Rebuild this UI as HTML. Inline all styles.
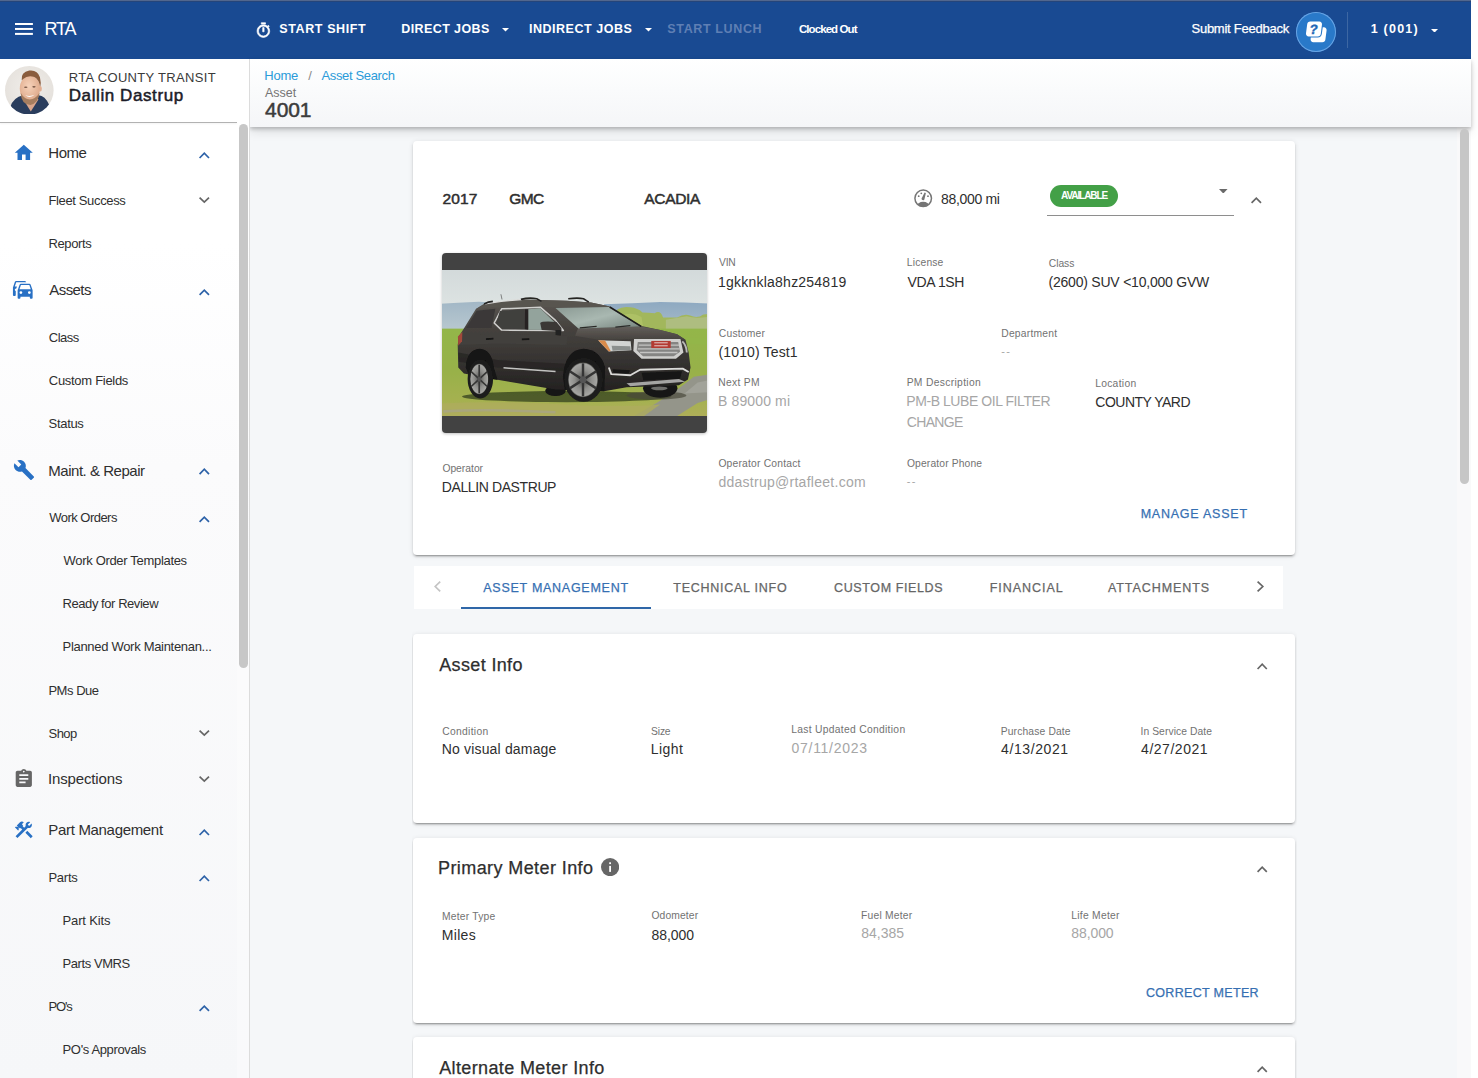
<!DOCTYPE html>
<html lang="en"><head><meta charset="utf-8"><title>RTA - Asset 4001</title>
<style>

html,body{margin:0;padding:0}
body{width:1478px;height:1078px;overflow:hidden;background:#ffffff;position:relative;font-family:"Liberation Sans",Arial,sans-serif}
.a{position:absolute}
.t{position:absolute;white-space:nowrap;line-height:20px;margin:0}
.wr{font-weight:400}
.wm{font-weight:400;-webkit-text-stroke:0.25px currentColor}
.wM{font-weight:400;-webkit-text-stroke:0.5px currentColor}
.wb{font-weight:700}
.mk{display:inline-block;width:0;height:0}
#topline{left:0;top:0;width:1471px;height:1px;background:#52678e;z-index:3}
#appbar{left:0;top:1px;width:1471px;height:58px;background:#194a92;box-shadow:inset 0 1px 0 #25457a}
#main{left:250px;top:59px;width:1221px;height:1019px;background:#f5f7f9;overflow:hidden}
#crumbbar{left:250px;top:59px;width:1221px;height:68px;background:linear-gradient(180deg,#ffffff 0%,#fafbfc 45%,#f5f6f8 100%);box-shadow:0 2px 4px rgba(0,0,0,.22),0 5px 10px rgba(0,0,0,.10)}
#side{left:0;top:59px;width:249px;height:1019px;background:linear-gradient(180deg,#ffffff 0%,#ffffff 18%,#fbfbfc 40%,#f6f7f9 100%);border-right:1px solid #dcdcdc;overflow:hidden}
#user{left:0;top:0;width:249px;height:63px;background:#fff}
#uline{left:0;top:122px;width:237px;height:1px;background:#b2b2b2;box-shadow:0 1px 2px rgba(0,0,0,.07)}
#sb1{left:239px;top:124px;width:9px;height:544px;border-radius:4.5px;background:#c7c7c7}
#sb2{left:1460px;top:129px;width:9px;height:355px;border-radius:5px;background:#c6c6c6}
#sbtrack1{left:237px;top:123px;width:12px;height:955px;background:rgba(255,255,255,.3)}
#sbtrack{left:1457px;top:127px;width:14px;height:951px;background:#f9f9fa}
.card{position:absolute;background:#fff;border-radius:4px;box-shadow:0 3px 1px -2px rgba(0,0,0,.2),0 2px 2px 0 rgba(0,0,0,.14),0 1px 5px 0 rgba(0,0,0,.12)}
#c1{left:413px;top:141px;width:882px;height:414px}
#lower{left:411.500px;top:620px;width:885px;height:458px;overflow:hidden}
#c2{left:1.500px;top:14px;width:882px;height:189px}
#c3{left:1.500px;top:218px;width:882px;height:185px}
#c4{left:1.500px;top:417px;width:882px;height:80px}
#tabs{left:414px;top:566px;width:869px;height:43px;background:#fff}
#ink{left:461px;top:606.5px;width:189.5px;height:2.5px;background:#2f67a8}
#photo{left:442px;top:253px;width:265px;height:180px;border-radius:4px;background:#424242;overflow:hidden;box-shadow:0 1px 3px rgba(0,0,0,.25)}
#photo svg{position:absolute;left:0;top:17px}
#chip{left:1050px;top:185px;width:68px;height:22px;border-radius:11px;background:#43a047}
#selline{left:1047px;top:215px;width:187px;height:1px;background:#8e8e8e}
#fb{left:1296px;top:12px;width:40px;height:40px;border-radius:50%;background:#2979c9;box-shadow:inset 0 0 0 1px rgba(120,175,235,.8)}
#vdiv{left:1347px;top:12px;width:1px;height:36px;background:rgba(255,255,255,.16)}
svg{display:block}


</style></head>
<body>

<div class="a" id="topline"></div>
<header class="a" id="appbar"></header>
<div class="a" id="fb"></div>
<div class="a" id="vdiv"></div>
<main class="a" id="main"></main>
<div class="a" id="sbtrack"></div>
<section class="card" id="c1"></section>
<div class="a" id="photo"><svg width="265" height="146" viewBox="33 118 1417 782" preserveAspectRatio="none">
<defs>
<linearGradient id="sky" x1="0" y1="0" x2="0" y2="1"><stop offset="0" stop-color="#d2d9da"/><stop offset=".6" stop-color="#dde3e2"/><stop offset="1" stop-color="#e6e9e5"/></linearGradient>
<linearGradient id="hl" x1="0" y1="0" x2="0" y2="1"><stop offset="0" stop-color="#a2b7c6"/><stop offset="1" stop-color="#b9c9d0"/></linearGradient>
<linearGradient id="hr" x1="0" y1="0" x2="0" y2="1"><stop offset="0" stop-color="#8ea9c1"/><stop offset="1" stop-color="#adc0cb"/></linearGradient>
<linearGradient id="grass" x1="0" y1="0" x2="0" y2="1"><stop offset="0" stop-color="#93b64a"/><stop offset=".45" stop-color="#97b149"/><stop offset=".8" stop-color="#a5b150"/><stop offset="1" stop-color="#b0ae5b"/></linearGradient>
<linearGradient id="carbody" x1="0" y1="0" x2="0" y2="1"><stop offset="0" stop-color="#5b5753"/><stop offset=".3" stop-color="#46433f"/><stop offset=".62" stop-color="#383533"/><stop offset="1" stop-color="#232120"/></linearGradient>
<linearGradient id="hood" x1="0" y1="0" x2="0" y2="1"><stop offset="0" stop-color="#625e5a"/><stop offset="1" stop-color="#47433f"/></linearGradient>
<linearGradient id="ws" x1="0" y1="0" x2="1" y2="1"><stop offset="0" stop-color="#8a9993"/><stop offset=".5" stop-color="#a9b8b1"/><stop offset="1" stop-color="#75837d"/></linearGradient>
<radialGradient id="rim" cx=".5" cy=".5" r=".5"><stop offset="0" stop-color="#4d4d4b"/><stop offset=".55" stop-color="#8f8f8c"/><stop offset=".92" stop-color="#a5a5a2"/><stop offset="1" stop-color="#4a4a48"/></radialGradient>
<filter id="soft" x="-2%" y="-2%" width="104%" height="104%"><feGaussianBlur stdDeviation="2.4"/></filter>
</defs>
<g filter="url(#soft)">
<rect x="0" y="100" width="1500" height="350" fill="url(#sky)"/>
<path d="M0 300 L120 293 L230 288 L320 293 L420 300 L420 445 L0 445z" fill="url(#hl)"/>
<path d="M900 302 L1050 296 L1200 290 L1330 292 L1500 299 L1500 470 L900 470z" fill="url(#hr)"/>
<path d="M970 330 Q1000 310 1040 318 Q1080 322 1105 345 Q1140 345 1170 350 Q1200 330 1215 372 Q1250 372 1290 372 Q1330 350 1360 362 Q1400 380 1430 356 L1500 350 L1500 500 L960 480z" fill="#a2b75c"/>
<path d="M1230 385 Q1300 372 1340 366 Q1400 384 1500 360 L1500 495 L1230 490z" fill="#b0be86" opacity=".85"/>
<path d="M1000 360 Q1050 340 1100 370 L1110 430 L1000 430z" fill="#b3c46a" opacity=".7"/>
<rect x="0" y="432" width="1500" height="480" fill="url(#grass)"/>
<path d="M1100 468 L1500 486 L1500 520 L1100 500z" fill="#93b64a"/>
<path d="M1500 672 L1380 690 L1290 760 L1180 830 L1060 900 L1290 900 L1400 830 L1500 800z" fill="#94958a"/>
<path d="M1500 700 L1400 720 L1330 780 L1500 770z" fill="#a2a39a"/>
<path d="M0 835 Q300 815 700 838 Q1000 856 1200 838 L1100 910 L0 910z" fill="#aeac5c" opacity=".8"/>
<path d="M40 875 Q300 862 640 880" stroke="#a7a486" stroke-width="14" fill="none" opacity=".8"/>
<ellipse cx="700" cy="796" rx="560" ry="30" fill="#39461f" opacity=".8"/>
<ellipse cx="1180" cy="790" rx="160" ry="22" fill="#4a4a3c" opacity=".7"/>
<!-- far-side wheels -->
<ellipse cx="1200" cy="752" rx="92" ry="50" fill="#171717"/>
<ellipse cx="1195" cy="752" rx="44" ry="10" fill="#6f6f6d"/>
<ellipse cx="640" cy="765" rx="55" ry="28" fill="#151515"/>
<!-- body -->
<path d="M150 432 L215 326 L258 299 L350 287 L460 276 L700 283 L830 292 L925 312 L1100 418 L1200 440 L1290 462 L1335 492 L1352 560 L1362 640 L1348 705 L1300 735 L1020 746 L900 768 L640 758 L330 706 L150 672 L120 640 L117 520 L125 470z" fill="url(#carbody)"/>
<path d="M760 432 L1097 420 L1200 440 L1290 462 L1335 492 L1060 488 L870 492 L745 470z" fill="url(#hood)"/>
<path d="M262 300 L350 287 L460 276 L700 283 L830 292 L925 312 L935 318 L640 318 L560 316 L352 322 L300 318 L215 328z" fill="#58544f"/>
<path d="M130 470 L330 462 L700 470 L700 520 L330 512 L125 520z" fill="#45423f" opacity=".7"/>
<path d="M120 560 L330 600 L690 620 L690 660 L330 640 L122 610z" fill="#23211f" opacity=".6"/>
<!-- windows -->
<path d="M163 428 L218 336 L318 326 L298 428z" fill="#3a3938"/>
<path d="M312 402 L352 326 L560 318 L640 388 L682 442 L352 440z" fill="none" stroke="#cfcfcd" stroke-width="8" stroke-linejoin="round"/>
<path d="M342 338 L474 328 L476 436 L354 432 L324 402z" fill="#403f3e"/>
<path d="M494 328 L558 323 L656 418 L664 440 L494 438z" fill="#93a39c"/>
<path d="M476 328 L494 328 L494 438 L476 436z" fill="#252423"/>
<path d="M640 321 L925 316 L1092 420 L762 432z" fill="url(#ws)"/>
<path d="M930 316 L1098 420" stroke="#1f1e1d" stroke-width="9"/>
<path d="M770 428 L860 420 M960 424 L1040 416" stroke="#2a2928" stroke-width="6"/>
<!-- mirror -->
<path d="M558 402 Q565 394 600 394 L645 396 L672 428 L668 446 L566 440z" fill="#3b3836"/>
<path d="M640 440 L672 440 L668 470 L640 466z" fill="#232120"/>
<!-- roof rails -->
<path d="M262 300 L350 286 L460 276" stroke="#dcdcda" stroke-width="7" fill="none"/>
<path d="M455 275 Q500 264 540 272 L565 286" stroke="#262524" stroke-width="9" fill="none"/>
<path d="M258 300 Q280 288 305 286" stroke="#262524" stroke-width="9" fill="none"/>
<path d="M708 272 Q760 266 790 272 L818 290" stroke="#262524" stroke-width="9" fill="none"/>
<path d="M348 248 L354 276" stroke="#333" stroke-width="3"/>
<!-- wheel arches & wheels -->
<path d="M160 640 Q165 545 235 540 Q300 545 310 640 L330 706 L180 690z" fill="#121212"/>
<path d="M680 690 Q690 545 790 540 Q880 545 905 640 L900 768 L690 760z" fill="#121212"/>
<ellipse cx="238" cy="702" rx="68" ry="104" fill="#1c1c1b"/>
<ellipse cx="232" cy="702" rx="49" ry="82" fill="url(#rim)"/>
<ellipse cx="790" cy="706" rx="104" ry="118" fill="#1c1c1b"/>
<ellipse cx="787" cy="706" rx="80" ry="93" fill="url(#rim)"/>
<g stroke="#353534" stroke-width="13"><path d="M787 618 L787 794"/><path d="M716 660 L858 752"/><path d="M716 752 L858 660"/></g>
<g stroke="#353534" stroke-width="9"><path d="M232 626 L232 778"/><path d="M189 662 L275 742"/><path d="M189 742 L275 662"/></g>
<ellipse cx="787" cy="706" rx="17" ry="19" fill="#555"/><ellipse cx="232" cy="702" rx="10" ry="14" fill="#555"/>
<!-- front fascia -->
<path d="M868 494 L1042 500 L1046 548 L925 554z" fill="#d2d4d2"/>
<path d="M868 494 L905 496 L935 552 L925 554z" fill="#d98b4c"/>
<path d="M940 524 L1040 526 L1042 547 L945 551z" fill="#8b8f8d"/>
<path d="M1060 488 L1308 488 L1324 560 L1284 594 L1100 594 L1056 552z" fill="#cfcfcd"/>
<path d="M1080 504 L1296 504 L1306 556 L1272 580 L1108 580 L1074 548z" fill="#858583"/>
<path d="M1085 520 L1300 520 M1080 540 L1304 540 M1092 560 L1292 560" stroke="#c4c4c2" stroke-width="7"/>
<rect x="1152" y="498" width="104" height="38" fill="#b33a33"/>
<path d="M1168 508 L1240 508 M1168 524 L1240 524" stroke="#e8d6d4" stroke-width="5"/>
<path d="M1318 500 Q1340 520 1342 560" stroke="#b9b9b7" stroke-width="10" fill="none"/>
<path d="M925 640 L938 676 L1040 682 L1092 652 L1320 646 L1352 664" fill="none" stroke="#d9d9d7" stroke-width="10" stroke-linejoin="round"/>
<path d="M945 650 L1040 655 L1030 672 L950 668z" fill="#161616"/>
<path d="M1100 668 L1316 660 L1306 700 L1110 708z" fill="#161615"/>
<path d="M1020 724 L1300 702 L1334 716 L1040 740z" fill="#a5a5a3"/>
<path d="M362 642 L640 662" stroke="#c3c3c1" stroke-width="8"/>
<path d="M118 474 L142 450 L140 500 L120 524z" fill="#a2483b"/>
<path d="M268 488 L308 486" stroke="#121212" stroke-width="9"/><path d="M460 490 L500 488" stroke="#121212" stroke-width="9"/>
</g>
</svg></div>
<div class="a" id="chip"></div>
<div class="a" id="selline"></div>
<div class="a" id="tabs"></div>
<div class="a" id="ink"></div>
<div class="a" id="lower">
<section class="card" id="c2"></section>
<section class="card" id="c3"></section>
<section class="card" id="c4"></section>
</div>
<div class="a" id="crumbbar"></div>
<div class="a" id="sb2"></div>
<aside class="a" id="side"><div class="a" id="user"></div></aside>
<div class="a" id="sbtrack1"></div>
<div class="a" id="uline"></div>
<div class="a" id="sb1"></div>
<div class="a" style="left:5.3px;top:65.5px;width:48.6px;height:48.6px"><svg width="48.6" height="48.6" viewBox="0 0 48 48">
<defs><clipPath id="avc"><circle cx="24" cy="24" r="24"/></clipPath>
<radialGradient id="avb" cx=".5" cy=".45" r=".55"><stop offset="0" stop-color="#f1eeea"/><stop offset="1" stop-color="#e4e0db"/></radialGradient>
<radialGradient id="avf" cx=".45" cy=".4" r=".6"><stop offset="0" stop-color="#f6d2ba"/><stop offset="1" stop-color="#dfa98a"/></radialGradient>
<filter id="avs" x="-5%" y="-5%" width="110%" height="110%"><feGaussianBlur stdDeviation=".55"/></filter></defs>
<g clip-path="url(#avc)"><g filter="url(#avs)">
<rect x="-2" y="-2" width="52" height="52" fill="url(#avb)"/>
<path d="M5 41 Q8 31 18 29 L32 29 Q39 28 44 39 L47 52 L2 52z" fill="#2c3e5d"/>
<path d="M20 36 L25.500 45 L33 33 L30 30 L21 31z" fill="#d9a58c"/>
<ellipse cx="24.600" cy="22.300" rx="10" ry="13" fill="url(#avf)"/>
<path d="M15.500 26.500 Q16 38 25 38.500 Q33 37 34.200 26.500 Q30 33 24.500 33 Q19 33 15.500 26.500z" fill="#a67d5f"/>
<path d="M20 29 Q24.500 32.500 29.500 28.500 Q25 30.500 20 29z" fill="#fff"/>
<path d="M16.500 14 Q15.500 6 24 4.500 Q32 3.500 34.500 11 Q36 17 34.800 21 Q33.500 13 29 10.800 Q22 9 18 12.800 Q16.500 14 16.500 14z" fill="#8a5b3d"/>
<ellipse cx="20.500" cy="21" rx="1.700" ry=".8" fill="#7b5a48"/><ellipse cx="28.600" cy="20.600" rx="1.700" ry=".8" fill="#7b5a48"/>
<ellipse cx="35" cy="22.500" rx="1.400" ry="2.800" fill="#e2ae92"/>
</g></g></svg></div>

<svg class="a" style="left:15.4px;top:22.7px" width="17.9" height="12" viewBox="0 0 17.9 12" ><rect x="0" y="0" width="17.9" height="2" fill="#fff"/><rect x="0" y="4.95" width="17.9" height="2" fill="#fff"/><rect x="0" y="9.9" width="17.9" height="2" fill="#fff"/></svg>
<svg class="a" style="left:254.5px;top:21.7px" width="16.8" height="16.8" viewBox="0 0 24 24" ><path d="M15 1H9v2h6V1zm-4 13h2V8h-2v6zm8.030-6.610l1.420-1.420c-.43-.51-.9-.99-1.410-1.410l-1.420 1.420C16.070 4.740 14.120 4 12 4c-4.970 0-9 4.030-9 9s4.020 9 9 9 9-4.030 9-9c0-2.120-.74-4.070-1.970-5.610zM12 20c-3.870 0-7-3.130-7-7s3.130-7 7-7 7 3.130 7 7-3.130 7-7 7z" fill="#fff" stroke="#fff" stroke-width="0.9"/></svg>
<svg class="a" style="left:502.2px;top:28.4px" width="7.0" height="3.5" viewBox="0 0 7.0 3.5" ><polygon points="0,0 7.0,0 3.5,3.5" fill="#fff"/></svg>
<svg class="a" style="left:644.8px;top:28.4px" width="7.0" height="3.5" viewBox="0 0 7.0 3.5" ><polygon points="0,0 7.0,0 3.5,3.5" fill="#fff"/></svg>
<svg class="a" style="left:1430.8px;top:28.8px" width="7.100000000000136" height="3.599999999999998" viewBox="0 0 7.100000000000136 3.599999999999998" ><polygon points="0,0 7.100000000000136,0 3.550000000000068,3.599999999999998" fill="#fff"/></svg>
<svg class="a" style="left:1296px;top:12px" width="40" height="40" viewBox="1296 12 40 40" ><g transform="translate(4.6,5.8)"><path d="M1310.3 21.5h9a2.7 2.7 0 0 1 2.68 3.1l-1.2 9.1a3.1 3.1 0 0 1-3.1 2.700h-9a2.700 2.700 0 0 1-2.680-3.100l1.200-9.100a3.100 3.100 0 0 1 3.100-2.700z" fill="#fff"/></g><path d="M1310.3 21.5h9a2.7 2.7 0 0 1 2.68 3.1l-1.2 9.1a3.1 3.1 0 0 1-3.1 2.700h-9a2.700 2.700 0 0 1-2.680-3.100l1.200-9.100a3.100 3.100 0 0 1 3.100-2.700z" fill="#fff" stroke="#2979c9" stroke-width="2.2" paint-order="stroke"/><text x="1313.900" y="34.100" font-family="Liberation Sans, Arial, sans-serif" font-weight="700" font-size="13.500" fill="#2468b6" stroke="#2468b6" stroke-width=".4" text-anchor="middle" transform="skewX(-8)" style="transform-origin:1314px 29px">?</text></svg>
<svg class="a" style="left:12.65px;top:141.9px" width="21.6" height="21.6" viewBox="0 0 24 24" ><path d="M10 20v-6h4v6h5v-8h3L12 3 2 12h3v8z" fill="#2870c4"/></svg>
<svg class="a" style="left:11.9px;top:278.9px" width="22.5" height="22.5" viewBox="0 0 24 24" ><path d="M8,11L9.5,6.5H18.5L20,11M18.5,16A1.5,1.5 0 0,1 17,14.5A1.5,1.5 0 0,1 18.5,13A1.5,1.5 0 0,1 20,14.5A1.5,1.5 0 0,1 18.5,16M9.5,16A1.5,1.5 0 0,1 8,14.5A1.5,1.5 0 0,1 9.5,13A1.5,1.5 0 0,1 11,14.5A1.5,1.5 0 0,1 9.5,16M19.92,6C19.71,5.4 19.14,5 18.5,5H9.5C8.86,5 8.29,5.4 8.08,6L6,12V20A1,1 0 0,0 7,21H8A1,1 0 0,0 9,20V19H19V20A1,1 0 0,0 20,21H21A1,1 0 0,0 22,20V12L19.92,6M14.92,3C14.71,2.4 14.14,2 13.5,2H4.5C3.86,2 3.29,2.4 3.08,3L1,9V17A1,1 0 0,0 2,18H3A1,1 0 0,0 4,17V12.91C3.22,12.63 2.82,11.77 3.1,11C3.32,10.4 3.87,10 4.5,10H4.57L5.27,8H3L4.5,3.5H15.09L14.92,3Z" fill="#2870c4"/></svg>
<svg class="a" style="left:13px;top:459.3px" width="22" height="22" viewBox="0 0 24 24" ><path d="M22.7 19l-9.1-9.1c.9-2.3.4-5-1.5-6.9-2-2-5-2.400-7.400-1.300L9 6 6 9 1.600 4.700C.4 7.100.9 10.100 2.900 12.100c1.900 1.900 4.600 2.400 6.900 1.500l9.100 9.100c.4.4 1 .4 1.400 0l2.300-2.300c.5-.4.5-1.100.1-1.400z" fill="#2870c4"/></svg>
<svg class="a" style="left:12.9px;top:768.3px" width="21.6" height="21.6" viewBox="0 0 24 24" ><path d="M19 3h-4.180C14.400 1.840 13.300 1 12 1c-1.300 0-2.400.84-2.820 2H5c-1.100 0-2 .9-2 2v14c0 1.100.9 2 2 2h14c1.100 0 2-.9 2-2V5c0-1.100-.9-2-2-2zm-7 0c.55 0 1 .45 1 1s-.45 1-1 1-1-.45-1-1 .45-1 1-1zm2 14H7v-2h7v2zm3-4H7v-2h10v2zm0-4H7V7h10v2z" fill="#666666"/></svg>
<svg class="a" style="left:13px;top:819.2px" width="21.6" height="21.6" viewBox="0 0 24 24" ><path d="M13.78 15.3L19.78 21.3L21.89 19.14L15.89 13.14L13.78 15.3M17.5 10.1C17.11 10.1 16.69 10.05 16.36 9.91L4.97 21.25L2.86 19.14L10.27 11.74L8.5 9.96L7.78 10.66L6.33 9.25V12.11L5.63 12.81L2.11 9.25L2.81 8.55H5.62L4.22 7.14L7.78 3.58C8.95 2.41 10.83 2.41 12 3.58L9.89 5.74L11.3 7.14L10.59 7.85L12.38 9.63L14.2 7.75C14.06 7.42 14 7 14 6.63C14 4.66 15.56 3.11 17.5 3.11C18.09 3.11 18.61 3.25 19.08 3.53L16.41 6.2L17.91 7.7L20.58 5.03C20.86 5.5 21 6 21 6.63C21 8.55 19.45 10.1 17.5 10.1Z" fill="#2870c4"/></svg>
<svg class="a" style="left:198px;top:151px" width="12.599999999999994" height="8.599999999999994" viewBox="-1 -1 12.599999999999994 8.599999999999994" ><polyline points="0.59,6.00 5.30,1.22 10.00,6.00" fill="none" stroke="#2d62a8" stroke-width="1.7" stroke-linejoin="miter"/></svg>
<svg class="a" style="left:198px;top:195.6px" width="12.599999999999994" height="8.400000000000006" viewBox="-1 -1 12.599999999999994 8.400000000000006" ><polyline points="0.59,0.59 5.30,5.18 10.00,0.59" fill="none" stroke="#666666" stroke-width="1.7" stroke-linejoin="miter"/></svg>
<svg class="a" style="left:198px;top:287.6px" width="12.599999999999994" height="8.399999999999977" viewBox="-1 -1 12.599999999999994 8.399999999999977" ><polyline points="0.59,5.80 5.30,1.22 10.00,5.80" fill="none" stroke="#2d62a8" stroke-width="1.7" stroke-linejoin="miter"/></svg>
<svg class="a" style="left:198px;top:467.2px" width="12.599999999999994" height="8.800000000000011" viewBox="-1 -1 12.599999999999994 8.800000000000011" ><polyline points="0.59,6.21 5.30,1.22 10.00,6.21" fill="none" stroke="#2d62a8" stroke-width="1.7" stroke-linejoin="miter"/></svg>
<svg class="a" style="left:198px;top:514.7px" width="12.599999999999994" height="8.5" viewBox="-1 -1 12.599999999999994 8.5" ><polyline points="0.59,5.91 5.30,1.22 10.00,5.91" fill="none" stroke="#2d62a8" stroke-width="1.7" stroke-linejoin="miter"/></svg>
<svg class="a" style="left:198px;top:729px" width="12.599999999999994" height="8.399999999999977" viewBox="-1 -1 12.599999999999994 8.399999999999977" ><polyline points="0.59,0.59 5.30,5.18 10.00,0.59" fill="none" stroke="#666666" stroke-width="1.7" stroke-linejoin="miter"/></svg>
<svg class="a" style="left:198px;top:774.6px" width="12.599999999999994" height="8.399999999999977" viewBox="-1 -1 12.599999999999994 8.399999999999977" ><polyline points="0.59,0.59 5.30,5.18 10.00,0.59" fill="none" stroke="#666666" stroke-width="1.7" stroke-linejoin="miter"/></svg>
<svg class="a" style="left:198px;top:827.6px" width="12.599999999999994" height="8.600000000000023" viewBox="-1 -1 12.599999999999994 8.600000000000023" ><polyline points="0.59,6.01 5.30,1.22 10.00,6.01" fill="none" stroke="#2d62a8" stroke-width="1.7" stroke-linejoin="miter"/></svg>
<svg class="a" style="left:198px;top:873.6px" width="12.599999999999994" height="8.600000000000023" viewBox="-1 -1 12.599999999999994 8.600000000000023" ><polyline points="0.59,6.01 5.30,1.22 10.00,6.01" fill="none" stroke="#2d62a8" stroke-width="1.7" stroke-linejoin="miter"/></svg>
<svg class="a" style="left:198px;top:1004px" width="12.599999999999994" height="8.399999999999977" viewBox="-1 -1 12.599999999999994 8.399999999999977" ><polyline points="0.59,5.80 5.30,1.22 10.00,5.80" fill="none" stroke="#2d62a8" stroke-width="1.7" stroke-linejoin="miter"/></svg>
<svg class="a" style="left:1250.3px;top:196px" width="12.600000000000136" height="8.400000000000006" viewBox="-1 -1 12.600000000000136 8.400000000000006" ><polyline points="0.59,5.81 5.30,1.22 10.01,5.81" fill="none" stroke="#666" stroke-width="1.7" stroke-linejoin="miter"/></svg>
<svg class="a" style="left:1256.4px;top:661.6px" width="12.399999999999864" height="8.600000000000023" viewBox="-1 -1 12.399999999999864 8.600000000000023" ><polyline points="0.59,6.01 5.20,1.22 9.80,6.01" fill="none" stroke="#666" stroke-width="1.7" stroke-linejoin="miter"/></svg>
<svg class="a" style="left:1256.4px;top:864.8px" width="12.399999999999864" height="8.5" viewBox="-1 -1 12.399999999999864 8.5" ><polyline points="0.59,5.91 5.20,1.22 9.80,5.91" fill="none" stroke="#666" stroke-width="1.7" stroke-linejoin="miter"/></svg>
<svg class="a" style="left:1256.4px;top:1064.8px" width="12.399999999999864" height="8.5" viewBox="-1 -1 12.399999999999864 8.5" ><polyline points="0.59,5.91 5.20,1.22 9.80,5.91" fill="none" stroke="#666" stroke-width="1.7" stroke-linejoin="miter"/></svg>
<svg class="a" style="left:1219.4px;top:188.9px" width="8.599999999999909" height="4.599999999999994" viewBox="0 0 8.599999999999909 4.599999999999994" ><polygon points="0,0 8.599999999999909,0 4.2999999999999545,4.599999999999994" fill="#6a6a6a"/></svg>
<svg class="a" style="left:432.8px;top:580.2px" width="8.800000000000011" height="13.0" viewBox="-1 -1 8.800000000000011 13.0" ><polyline points="6.21,0.59 1.22,5.50 6.21,10.40" fill="none" stroke="#c4c4c4" stroke-width="1.7"/></svg>
<svg class="a" style="left:1256.4px;top:580.2px" width="9.0" height="13.0" viewBox="-1 -1 9.0 13.0" ><polyline points="0.59,0.59 5.78,5.50 0.59,10.40" fill="none" stroke="#666" stroke-width="1.7"/></svg>
<svg class="a" style="left:913px;top:187.6px" width="20.4" height="20.6" viewBox="913 187.6 20.4 20.6" ><defs><clipPath id="spc"><circle cx="923.2" cy="197.9" r="8.3"/></clipPath></defs><ellipse cx="923.2" cy="206.2" rx="6.4" ry="4.9" fill="#757575" clip-path="url(#spc)"/><circle cx="923.2" cy="197.9" r="8.3" fill="none" stroke="#757575" stroke-width="1.5"/><path d="M922.1 197.2 L924.6 192.2 L925.9 192.7 L924.6 198.200 A1.5 1.5 0 1 1 922.100 197.200z" fill="#757575"/><circle cx="918.7" cy="195.8" r="0.9" fill="#757575"/><circle cx="921.3" cy="192.9" r="0.9" fill="#757575"/><circle cx="928" cy="195.8" r="0.9" fill="#757575"/></svg>
<svg class="a" style="left:600.7px;top:857.9px" width="18.2" height="18.2" viewBox="0 0 18.2 18.2" ><circle cx="9.1" cy="9.100" r="9.1" fill="#666"/><rect x="8.2" y="4.300" width="1.8" height="1.8" fill="#fff"/><rect x="8.2" y="7.900" width="1.8" height="6" fill="#fff"/></svg>
<div id="texts">
<div id="tx-appbar">
<span class="t wr" id="t0" style="left:44.45px;top:19.00px;font-size:18px;color:#ffffff;letter-spacing:-1.157px">RTA</span>
<span class="t wb" id="t1" style="left:279.33px;top:19.00px;font-size:12.5px;color:#ffffff;letter-spacing:0.607px">START SHIFT</span>
<span class="t wb" id="t2" style="left:401.27px;top:19.00px;font-size:12.5px;color:#ffffff;letter-spacing:0.408px">DIRECT JOBS</span>
<span class="t wb" id="t3" style="left:528.90px;top:19.00px;font-size:12.5px;color:#ffffff;letter-spacing:0.541px">INDIRECT JOBS</span>
<span class="t wb" id="t4" style="left:667.35px;top:19.00px;font-size:12.5px;color:#5f7fb4;letter-spacing:0.630px">START LUNCH</span>
<span class="t wb" id="t5" style="left:798.90px;top:19.00px;font-size:11.5px;color:#ffffff;letter-spacing:-0.914px">Clocked Out</span>
<span class="t wm" id="t6" style="left:1191.49px;top:19.00px;font-size:13px;color:#ffffff;letter-spacing:-0.249px">Submit Feedback</span>
<span class="t wb" id="t7" style="left:1370.69px;top:19.00px;font-size:12.5px;color:#ffffff;letter-spacing:1.225px">1 (001)</span>
</div>
<div id="tx-user">
<span class="t wr" id="t8" style="left:68.73px;top:68.00px;font-size:13px;color:#3a3a3a;letter-spacing:0.330px">RTA COUNTY TRANSIT</span>
<span class="t wM" id="t9" style="left:68.76px;top:86.00px;font-size:17px;color:#1c1c28;letter-spacing:0.589px">Dallin Dastrup</span>
</div>
<div id="tx-crumbs">
<span class="t wr" id="t10" style="left:264.23px;top:66.00px;font-size:13px;color:#2b9bd9;letter-spacing:-0.190px">Home</span>
<span class="t wr" id="t11" style="left:308.29px;top:66.00px;font-size:13px;color:#8a8a8a;letter-spacing:0.000px">/</span>
<span class="t wr" id="t12" style="left:321.44px;top:66.00px;font-size:13px;color:#2b9bd9;letter-spacing:-0.353px">Asset Search</span>
<span class="t wr" id="t13" style="left:264.88px;top:83.00px;font-size:12.5px;color:#757575;letter-spacing:0.049px">Asset</span>
<span class="t wM" id="t14" style="left:265.02px;top:100.00px;font-size:21px;color:#3c3c3c;letter-spacing:-0.068px">4001</span>
</div>
<nav id="tx-nav">
<a class="t wr" id="t15" style="left:48.35px;top:143.00px;font-size:15px;color:#2f2f2f;letter-spacing:-0.538px">Home</a>
<a class="t wr" id="t16" style="left:48.40px;top:191.00px;font-size:13px;color:#2f2f2f;letter-spacing:-0.351px">Fleet Success</a>
<a class="t wr" id="t17" style="left:48.40px;top:234.00px;font-size:13px;color:#2f2f2f;letter-spacing:-0.347px">Reports</a>
<a class="t wr" id="t18" style="left:49.28px;top:280.00px;font-size:15px;color:#2f2f2f;letter-spacing:-0.567px">Assets</a>
<a class="t wr" id="t19" style="left:48.84px;top:328.00px;font-size:13px;color:#2f2f2f;letter-spacing:-0.503px">Class</a>
<a class="t wr" id="t20" style="left:48.84px;top:371.00px;font-size:13px;color:#2f2f2f;letter-spacing:-0.298px">Custom Fields</a>
<a class="t wr" id="t21" style="left:48.62px;top:414.00px;font-size:13px;color:#2f2f2f;letter-spacing:-0.322px">Status</a>
<a class="t wr" id="t22" style="left:48.35px;top:461.00px;font-size:15px;color:#2f2f2f;letter-spacing:-0.480px">Maint. &amp; Repair</a>
<a class="t wr" id="t23" style="left:49.36px;top:508.00px;font-size:13px;color:#2f2f2f;letter-spacing:-0.541px">Work Orders</a>
<a class="t wr" id="t24" style="left:63.50px;top:551.00px;font-size:13px;color:#2f2f2f;letter-spacing:-0.313px">Work Order Templates</a>
<a class="t wr" id="t25" style="left:62.57px;top:594.00px;font-size:13px;color:#2f2f2f;letter-spacing:-0.441px">Ready for Review</a>
<a class="t wr" id="t26" style="left:62.57px;top:637.00px;font-size:13px;color:#2f2f2f;letter-spacing:-0.304px">Planned Work Maintenan...</a>
<a class="t wr" id="t27" style="left:48.40px;top:681.00px;font-size:13px;color:#2f2f2f;letter-spacing:-0.459px">PMs Due</a>
<a class="t wr" id="t28" style="left:48.62px;top:724.00px;font-size:13px;color:#2f2f2f;letter-spacing:-0.614px">Shop</a>
<a class="t wr" id="t29" style="left:48.01px;top:769.00px;font-size:15px;color:#2f2f2f;letter-spacing:-0.146px">Inspections</a>
<a class="t wr" id="t30" style="left:48.35px;top:820.00px;font-size:15px;color:#2f2f2f;letter-spacing:-0.323px">Part Management</a>
<a class="t wr" id="t31" style="left:48.40px;top:868.00px;font-size:13px;color:#2f2f2f;letter-spacing:-0.224px">Parts</a>
<a class="t wr" id="t32" style="left:62.57px;top:911.00px;font-size:13px;color:#2f2f2f;letter-spacing:-0.146px">Part Kits</a>
<a class="t wr" id="t33" style="left:62.57px;top:954.00px;font-size:13px;color:#2f2f2f;letter-spacing:-0.437px">Parts VMRS</a>
<a class="t wr" id="t34" style="left:48.40px;top:997.00px;font-size:13px;color:#2f2f2f;letter-spacing:-1.106px">PO's</a>
<a class="t wr" id="t35" style="left:62.57px;top:1040.00px;font-size:13px;color:#2f2f2f;letter-spacing:-0.359px">PO's Approvals</a>
</nav>
<div id="tx-asset">
<span class="t wM" id="t36" style="left:442.52px;top:189.00px;font-size:15.5px;color:#2e2e2e;letter-spacing:0.108px">2017</span>
<span class="t wM" id="t37" style="left:509.31px;top:189.00px;font-size:15.5px;color:#2e2e2e;letter-spacing:-0.608px">GMC</span>
<span class="t wM" id="t38" style="left:644.31px;top:189.00px;font-size:15.5px;color:#2e2e2e;letter-spacing:-0.312px">ACADIA</span>
<span class="t wr" id="t39" style="left:941.08px;top:189.00px;font-size:14px;color:#2e2e2e;letter-spacing:-0.340px">88,000 mi</span>
<span class="t wb" id="t40" style="left:1061.11px;top:186.00px;font-size:10px;color:#ffffff;letter-spacing:-1.098px">AVAILABLE</span>
<span class="t wr" id="t41" style="left:719.07px;top:253.00px;font-size:10.3px;color:#727272;letter-spacing:-0.254px">VIN</span>
<span class="t wr" id="t42" style="left:718.08px;top:272.00px;font-size:14px;color:#2e2e2e;letter-spacing:0.222px">1gkknkla8hz254819</span>
<span class="t wr" id="t43" style="left:906.85px;top:253.00px;font-size:10.3px;color:#727272;letter-spacing:0.166px">License</span>
<span class="t wr" id="t44" style="left:907.46px;top:272.00px;font-size:14px;color:#2e2e2e;letter-spacing:-0.359px">VDA 1SH</span>
<span class="t wr" id="t45" style="left:1048.80px;top:254.00px;font-size:10.3px;color:#727272;letter-spacing:-0.057px">Class</span>
<span class="t wr" id="t46" style="left:1048.48px;top:272.00px;font-size:14px;color:#2e2e2e;letter-spacing:-0.216px">(2600) SUV &lt;10,000 GVW</span>
<span class="t wr" id="t47" style="left:718.80px;top:324.00px;font-size:10.3px;color:#727272;letter-spacing:0.209px">Customer</span>
<span class="t wr" id="t48" style="left:718.48px;top:342.00px;font-size:14px;color:#2e2e2e;letter-spacing:0.146px">(1010) Test1</span>
<span class="t wr" id="t49" style="left:1001.24px;top:324.00px;font-size:10.3px;color:#727272;letter-spacing:0.226px">Department</span>
<span class="t wr" id="t50" style="left:1001.34px;top:341.00px;font-size:11px;color:#a6a6a6;letter-spacing:1.182px">--</span>
<span class="t wr" id="t51" style="left:718.33px;top:373.00px;font-size:10.3px;color:#727272;letter-spacing:0.292px">Next PM</span>
<span class="t wr" id="t52" style="left:717.97px;top:391.00px;font-size:14px;color:#a6a6a6;letter-spacing:0.134px">B 89000 mi</span>
<span class="t wr" id="t53" style="left:906.68px;top:373.00px;font-size:10.3px;color:#727272;letter-spacing:0.326px">PM Description</span>
<span class="t wr" id="t54" style="left:906.27px;top:391.00px;font-size:14px;color:#a6a6a6;letter-spacing:-0.432px">PM-B LUBE OIL FILTER</span>
<span class="t wr" id="t55" style="left:906.75px;top:412.00px;font-size:14px;color:#a6a6a6;letter-spacing:-0.659px">CHANGE</span>
<span class="t wr" id="t56" style="left:1095.15px;top:374.00px;font-size:10.3px;color:#727272;letter-spacing:0.294px">Location</span>
<span class="t wr" id="t57" style="left:1095.36px;top:392.00px;font-size:14px;color:#2e2e2e;letter-spacing:-0.521px">COUNTY YARD</span>
<span class="t wr" id="t58" style="left:442.39px;top:459.00px;font-size:10.3px;color:#727272;letter-spacing:0.005px">Operator</span>
<span class="t wr" id="t59" style="left:441.76px;top:477.00px;font-size:14px;color:#2e2e2e;letter-spacing:-0.392px">DALLIN DASTRUP</span>
<span class="t wr" id="t60" style="left:718.39px;top:454.00px;font-size:10.3px;color:#727272;letter-spacing:0.204px">Operator Contact</span>
<span class="t wr" id="t61" style="left:718.39px;top:472.00px;font-size:14px;color:#a6a6a6;letter-spacing:0.271px">ddastrup@rtafleet.com</span>
<span class="t wr" id="t62" style="left:906.92px;top:454.00px;font-size:10.3px;color:#727272;letter-spacing:0.148px">Operator Phone</span>
<span class="t wr" id="t63" style="left:906.82px;top:471.00px;font-size:11px;color:#a6a6a6;letter-spacing:1.274px">--</span>
<span class="t wm" id="t64" style="left:1140.65px;top:504.00px;font-size:12.5px;color:#366fb2;letter-spacing:0.771px">MANAGE ASSET</span>
</div>
<div id="tx-tabs">
<a class="t wm" id="t65" style="left:483.27px;top:578.00px;font-size:12.5px;color:#366fb2;letter-spacing:0.730px">ASSET MANAGEMENT</a>
<a class="t wm" id="t66" style="left:673.29px;top:578.00px;font-size:12.5px;color:#666666;letter-spacing:0.744px">TECHNICAL INFO</a>
<a class="t wm" id="t67" style="left:834.11px;top:578.00px;font-size:12.5px;color:#666666;letter-spacing:0.601px">CUSTOM FIELDS</a>
<a class="t wm" id="t68" style="left:989.65px;top:578.00px;font-size:12.5px;color:#666666;letter-spacing:0.969px">FINANCIAL</a>
<a class="t wm" id="t69" style="left:1107.91px;top:578.00px;font-size:12.5px;color:#666666;letter-spacing:0.938px">ATTACHMENTS</a>
</div>
<div id="tx-assetinfo">
<span class="t wm" id="t70" style="left:439.24px;top:655.00px;font-size:18px;color:#2e2e2e;letter-spacing:0.356px">Asset Info</span>
<span class="t wr" id="t71" style="left:442.31px;top:722.00px;font-size:10.3px;color:#727272;letter-spacing:0.298px">Condition</span>
<span class="t wr" id="t72" style="left:441.76px;top:739.00px;font-size:14px;color:#2e2e2e;letter-spacing:0.169px">No visual damage</span>
<span class="t wr" id="t73" style="left:651.12px;top:722.00px;font-size:10.3px;color:#727272;letter-spacing:-0.185px">Size</span>
<span class="t wr" id="t74" style="left:650.80px;top:739.00px;font-size:14px;color:#2e2e2e;letter-spacing:0.442px">Light</span>
<span class="t wr" id="t75" style="left:791.15px;top:720.00px;font-size:10.3px;color:#727272;letter-spacing:0.303px">Last Updated Condition</span>
<span class="t wr" id="t76" style="left:791.58px;top:738.00px;font-size:14px;color:#a6a6a6;letter-spacing:0.703px">07/11/2023</span>
<span class="t wr" id="t77" style="left:1000.68px;top:722.00px;font-size:10.3px;color:#727272;letter-spacing:0.151px">Purchase Date</span>
<span class="t wr" id="t78" style="left:1001.10px;top:739.00px;font-size:14px;color:#2e2e2e;letter-spacing:0.590px">4/13/2021</span>
<span class="t wr" id="t79" style="left:1140.49px;top:722.00px;font-size:10.3px;color:#727272;letter-spacing:0.078px">In Service Date</span>
<span class="t wr" id="t80" style="left:1141.10px;top:739.00px;font-size:14px;color:#2e2e2e;letter-spacing:0.519px">4/27/2021</span>
</div>
<div id="tx-meter">
<span class="t wm" id="t81" style="left:438.01px;top:858.00px;font-size:18px;color:#2e2e2e;letter-spacing:0.410px">Primary Meter Info</span>
<span class="t wr" id="t82" style="left:441.94px;top:907.00px;font-size:10.3px;color:#727272;letter-spacing:0.213px">Meter Type</span>
<span class="t wr" id="t83" style="left:441.76px;top:925.00px;font-size:14px;color:#2e2e2e;letter-spacing:0.317px">Miles</span>
<span class="t wr" id="t84" style="left:651.39px;top:906.00px;font-size:10.3px;color:#727272;letter-spacing:0.139px">Odometer</span>
<span class="t wr" id="t85" style="left:651.41px;top:925.00px;font-size:14px;color:#2e2e2e;letter-spacing:-0.024px">88,000</span>
<span class="t wr" id="t86" style="left:861.11px;top:906.00px;font-size:10.3px;color:#727272;letter-spacing:0.199px">Fuel Meter</span>
<span class="t wr" id="t87" style="left:861.29px;top:923.00px;font-size:14px;color:#a6a6a6;letter-spacing:-0.027px">84,385</span>
<span class="t wr" id="t88" style="left:1071.24px;top:906.00px;font-size:10.3px;color:#727272;letter-spacing:0.280px">Life Meter</span>
<span class="t wr" id="t89" style="left:1071.29px;top:923.00px;font-size:14px;color:#a6a6a6;letter-spacing:-0.092px">88,000</span>
<span class="t wm" id="t90" style="left:1145.89px;top:983.00px;font-size:12.5px;color:#366fb2;letter-spacing:0.330px">CORRECT METER</span>
</div>
<div id="tx-altmeter">
<span class="t wm" id="t91" style="left:439.24px;top:1058.00px;font-size:18px;color:#2e2e2e;letter-spacing:0.372px">Alternate Meter Info</span>
</div>
</div>
</body></html>
